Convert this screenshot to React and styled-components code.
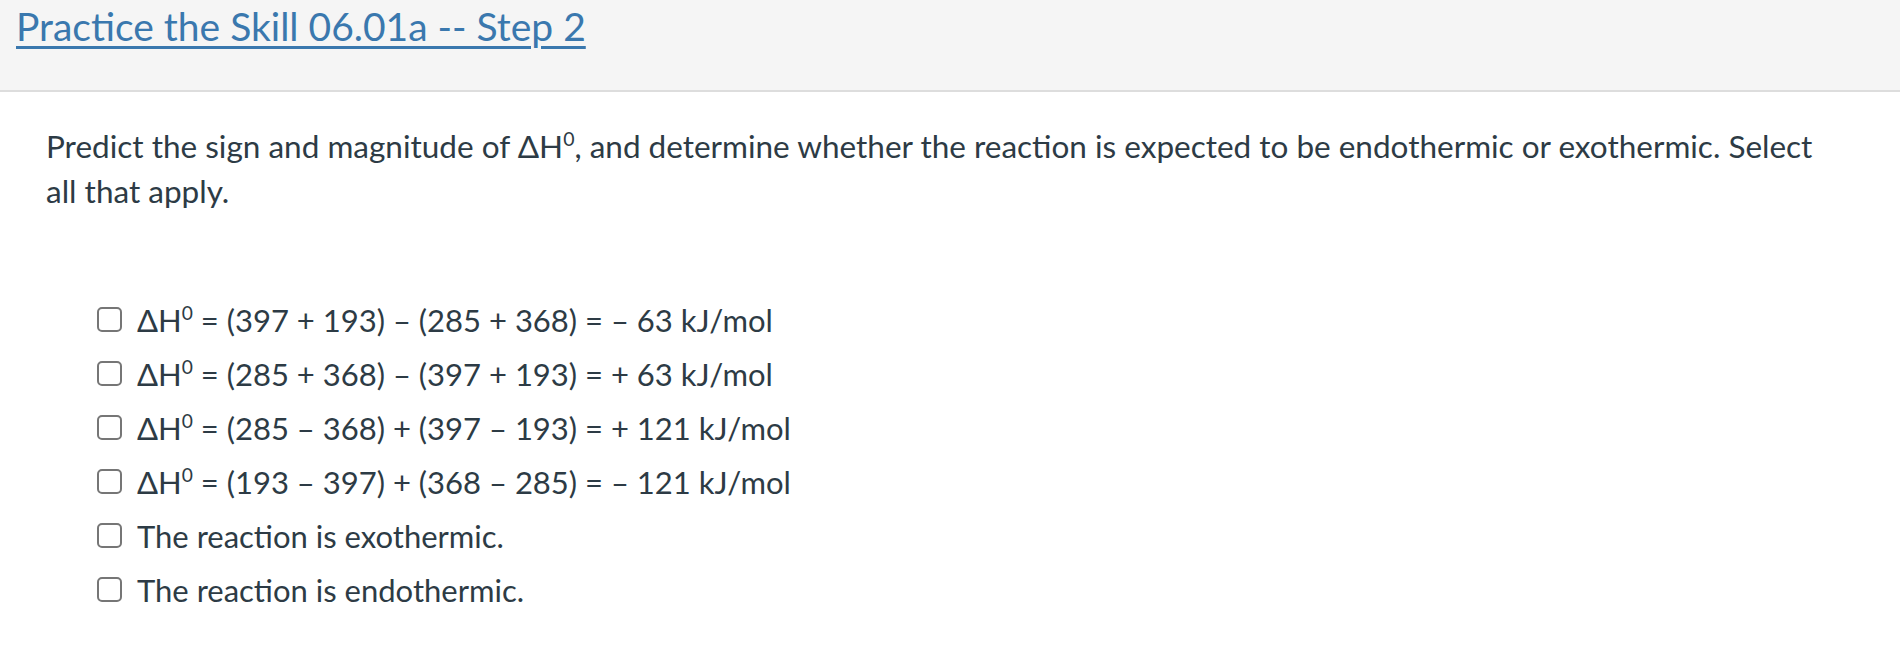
import React from "react";
import styled, { createGlobalStyle } from "styled-components";

const GlobalStyle = createGlobalStyle`
  html, body {
    margin: 0;
    padding: 0;
    background: #fff;
  }
  body {
    font-family: Lato, "Open Sans", "Liberation Sans", sans-serif;
    color: #2d3b45;
  }
`;

const Header = styled.header`
  background-color: #f5f5f5;
  height: 92px;
  border-bottom: 2px solid #dddddd;
  padding: 3px 16px 0;
  box-sizing: border-box;
`;

const Title = styled.a`
  font-size: 39px;
  line-height: 1.2;
  color: #3a78ae;
  text-decoration: underline;
  text-decoration-thickness: 3px;
  text-underline-offset: 5px;
  cursor: pointer;
`;

const Content = styled.main`
  padding: 32px 46px 40px;
`;

const Prompt = styled.p`
  margin: 0 0 79px;
  font-size: 31.5px;
  line-height: 45px;
  max-width: 1800px;
`;

const OptionList = styled.ul`
  list-style: none;
  margin: 0;
  padding: 0 0 0 51px;
`;

const Option = styled.li`
  display: flex;
  align-items: center;
  height: 54px;
  font-size: 31px;
`;

const Box = styled.input.attrs({ type: "checkbox" })`
  appearance: none;
  width: 25px;
  height: 25px;
  margin: 0 15px 0 0;
  border: 2px solid #767676;
  border-radius: 5px;
  box-sizing: border-box;
  background: #fff;
  flex-shrink: 0;
  position: relative;
  top: -1px;
`;

const Sup = styled.sup`
  font-size: 0.62em;
  line-height: 0;
  vertical-align: 0.62em;
`;

const Dh = () => (
  <>
    ΔH<Sup>0</Sup>
  </>
);

const options = [
  <><Dh /> = (397 + 193) – (285 + 368) = – 63 kJ/mol</>,
  <><Dh /> = (285 + 368) – (397 + 193) = + 63 kJ/mol</>,
  <><Dh /> = (285 – 368) + (397 – 193) = + 121 kJ/mol</>,
  <><Dh /> = (193 – 397) + (368 – 285) = – 121 kJ/mol</>,
  <>The reaction is exothermic.</>,
  <>The reaction is endothermic.</>,
];

export default function App() {
  return (
    <>
      <GlobalStyle />
      <Header>
        <Title>Practice the Skill 06.01a -- Step 2</Title>
      </Header>
      <Content>
        <Prompt>
          Predict the sign and magnitude of <Dh />, and determine whether the
          reaction is expected to be endothermic or exothermic. Select all
          that apply.
        </Prompt>
        <OptionList>
          {options.map((label, i) => (
            <Option key={i}>
              <Box />
              <span>{label}</span>
            </Option>
          ))}
        </OptionList>
      </Content>
    </>
  );
}
